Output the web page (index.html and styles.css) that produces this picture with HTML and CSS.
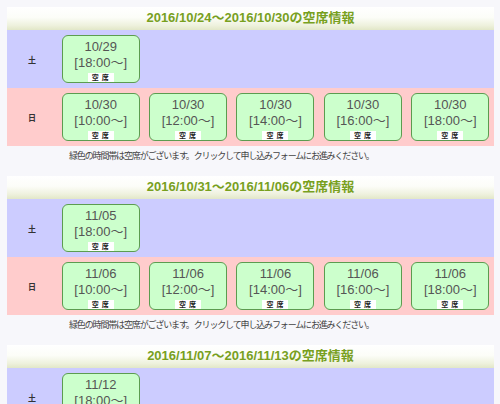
FILE: index.html
```html
<!DOCTYPE html>
<html lang="ja">
<head>
<meta charset="utf-8">
<title>空席情報</title>
<link rel="stylesheet" href="styles.css">
</head>
<body>
<div class="page">
  <section class="week">
    <h2 class="week-title">2016/10/24～2016/10/30の空席情報</h2>
    <div class="day sat">
      <div class="day-label">土</div>
      <a class="slot"><span class="date">10/29</span><span class="time">[18:00～]</span><span class="badge">空席</span></a>
    </div>
    <div class="day sun">
      <div class="day-label">日</div>
      <a class="slot"><span class="date">10/30</span><span class="time">[10:00～]</span><span class="badge">空席</span></a>
      <a class="slot"><span class="date">10/30</span><span class="time">[12:00～]</span><span class="badge">空席</span></a>
      <a class="slot"><span class="date">10/30</span><span class="time">[14:00～]</span><span class="badge">空席</span></a>
      <a class="slot"><span class="date">10/30</span><span class="time">[16:00～]</span><span class="badge">空席</span></a>
      <a class="slot"><span class="date">10/30</span><span class="time">[18:00～]</span><span class="badge">空席</span></a>
    </div>
    <p class="note">緑色の時間帯は空席がございます。クリックして申し込みフォームにお進みください。</p>
  </section>
  <section class="week">
    <h2 class="week-title">2016/10/31～2016/11/06の空席情報</h2>
    <div class="day sat">
      <div class="day-label">土</div>
      <a class="slot"><span class="date">11/05</span><span class="time">[18:00～]</span><span class="badge">空席</span></a>
    </div>
    <div class="day sun">
      <div class="day-label">日</div>
      <a class="slot"><span class="date">11/06</span><span class="time">[10:00～]</span><span class="badge">空席</span></a>
      <a class="slot"><span class="date">11/06</span><span class="time">[12:00～]</span><span class="badge">空席</span></a>
      <a class="slot"><span class="date">11/06</span><span class="time">[14:00～]</span><span class="badge">空席</span></a>
      <a class="slot"><span class="date">11/06</span><span class="time">[16:00～]</span><span class="badge">空席</span></a>
      <a class="slot"><span class="date">11/06</span><span class="time">[18:00～]</span><span class="badge">空席</span></a>
    </div>
    <p class="note">緑色の時間帯は空席がございます。クリックして申し込みフォームにお進みください。</p>
  </section>
  <section class="week">
    <h2 class="week-title">2016/11/07～2016/11/13の空席情報</h2>
    <div class="day sat">
      <div class="day-label">土</div>
      <a class="slot"><span class="date">11/12</span><span class="time">[18:00～]</span><span class="badge">空席</span></a>
    </div>
  </section>
</div>
</body>
</html>
```
FILE: styles.css
```css
html, body {
  margin: 0;
  padding: 0;
  background: #f7f7fb;
}
body {
  font-family: "Liberation Sans", "Noto Sans CJK JP", sans-serif;
  color: #444;
}
.page {
  padding: 7px 6px 0 7px;
}
.week {
  margin-bottom: 14px;
}
.week-title {
  margin: 0;
  height: 23px;
  line-height: 22px;
  text-align: center;
  font-size: 13px;
  font-weight: bold;
  color: #78a01e;
  font-family: "Liberation Sans", "Noto Sans CJK JP", sans-serif;
  background: linear-gradient(to bottom, #ffffff 0%, #fcfdf8 45%, #eef1dd 80%, #e2e7c8 100%);
}
.day {
  display: grid;
  grid-template-columns: 50px repeat(5, 1fr);
  align-items: center;
  height: 58px;
}
.sat {
  background: #ccccff;
}
.sun {
  background: #ffcccc;
}
.day-label {
  text-align: center;
  font-size: 8px;
  font-weight: bold;
  color: #333;
  font-family: "Noto Sans CJK JP", sans-serif;
}
.slot {
  justify-self: center;
  box-sizing: border-box;
  width: 78px;
  height: 48px;
  padding-top: 3px;
  border: 1px solid #5c9c50;
  border-radius: 6px;
  background: #ccffcc;
  display: flex;
  flex-direction: column;
  align-items: center;
  color: #555;
  font-size: 13px;
  line-height: 16px;
  cursor: pointer;
}
.date, .time {
  display: block;
}
.badge {
  margin-top: 2px;
  display: block;
  background: #fff;
  color: #222;
  font-family: "Noto Sans CJK JP", sans-serif;
  font-size: 7px;
  font-weight: bold;
  line-height: 9px;
  padding: 0 2px 0 4px;
  letter-spacing: 3px;
}
.note {
  margin: 0;
  padding: 3px 0 0 62px;
  height: 13px;
  font-family: "Noto Sans CJK JP", sans-serif;
  font-size: 9px;
  letter-spacing: -1.15px;
  line-height: 13px;
  color: #444;
}
```
